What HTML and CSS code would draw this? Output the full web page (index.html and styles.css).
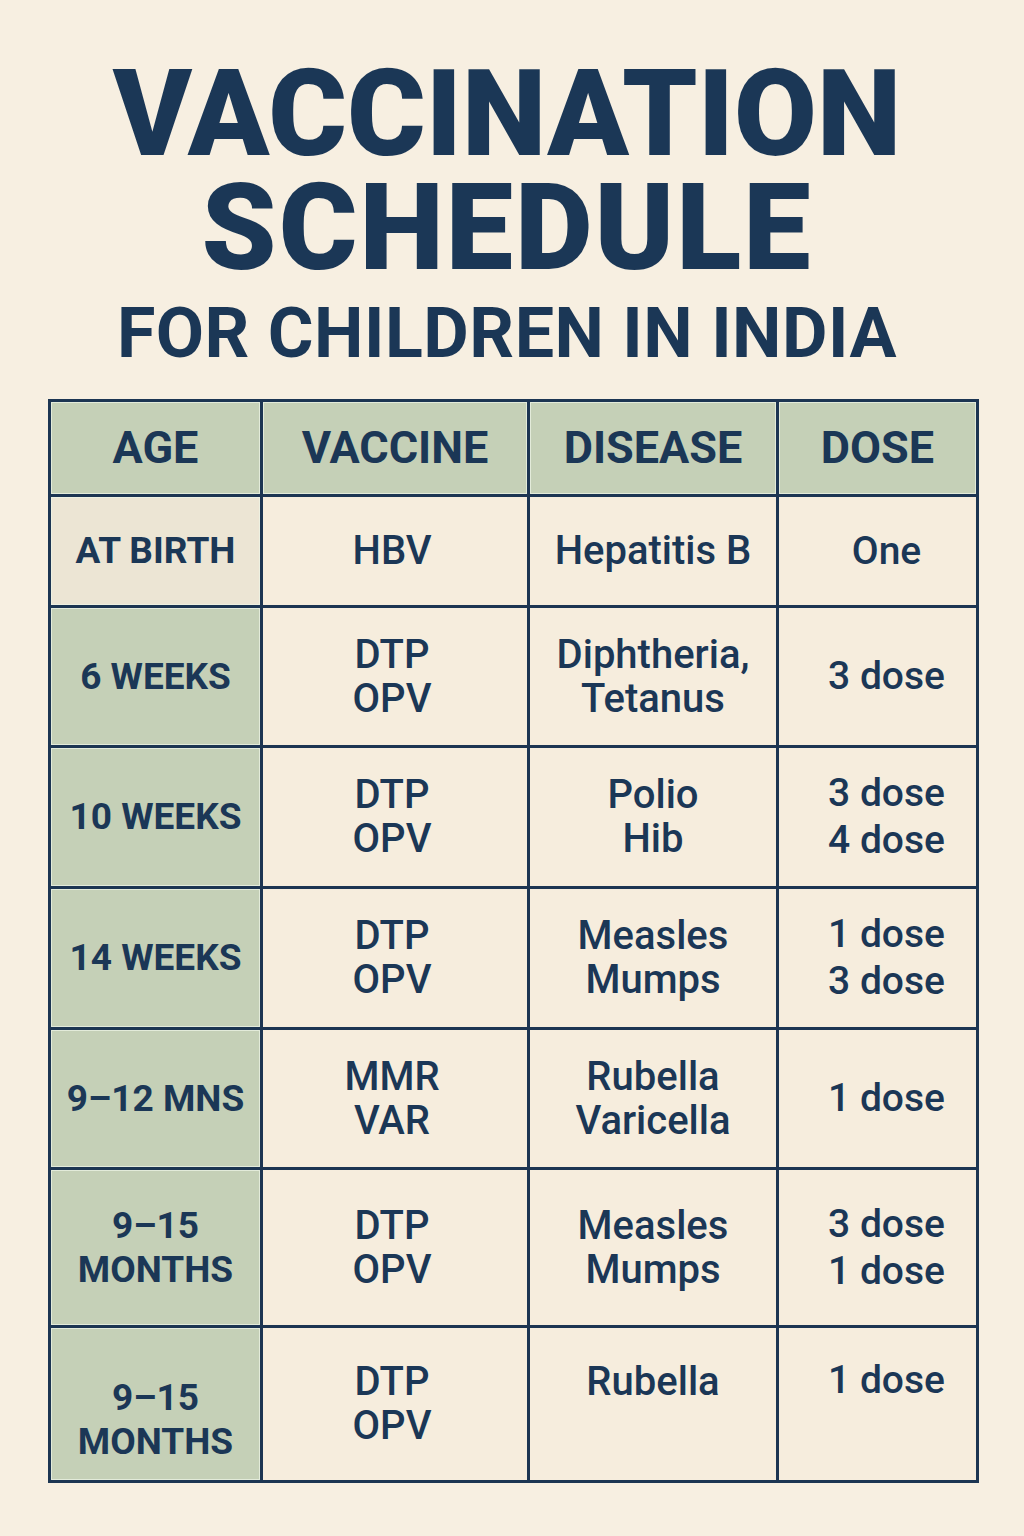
FILE: index.html
```html
<!DOCTYPE html>
<html lang="en">
<head>
<meta charset="utf-8">
<title>Vaccination Schedule for Children in India</title>
<link rel="stylesheet" href="styles.css">
</head>
<body>
<main class="page">
  <header class="heading">
    <h1 class="title"><span class="title-line">VACCINATION</span><span class="title-line wide">SCHEDULE</span></h1>
    <p class="subtitle">FOR CHILDREN IN INDIA</p>
  </header>
  <table class="schedule">
    <colgroup>
      <col class="c-age"><col class="c-vac"><col class="c-dis"><col class="c-dose">
    </colgroup>
    <thead>
      <tr class="r-head">
        <th>AGE</th><th>VACCINE</th><th>DISEASE</th><th>DOSE</th>
      </tr>
    </thead>
    <tbody>
      <tr class="r1">
        <td class="age age-birth">AT BIRTH</td>
        <td class="vac">HBV</td>
        <td class="dis">Hepatitis B</td>
        <td class="dose">One</td>
      </tr>
      <tr class="r2">
        <td class="age">6 WEEKS</td>
        <td class="vac">DTP<br>OPV</td>
        <td class="dis">Diphtheria,<br>Tetanus</td>
        <td class="dose">3 dose</td>
      </tr>
      <tr class="r3">
        <td class="age">10 WEEKS</td>
        <td class="vac">DTP<br>OPV</td>
        <td class="dis">Polio<br>Hib</td>
        <td class="dose">3 dose<br>4 dose</td>
      </tr>
      <tr class="r4">
        <td class="age">14 WEEKS</td>
        <td class="vac">DTP<br>OPV</td>
        <td class="dis">Measles<br>Mumps</td>
        <td class="dose">1 dose<br>3 dose</td>
      </tr>
      <tr class="r5">
        <td class="age">9–12 MNS</td>
        <td class="vac">MMR<br>VAR</td>
        <td class="dis">Rubella<br>Varicella</td>
        <td class="dose">1 dose</td>
      </tr>
      <tr class="r6">
        <td class="age">9–15<br>MONTHS</td>
        <td class="vac">DTP<br>OPV</td>
        <td class="dis">Measles<br>Mumps</td>
        <td class="dose">3 dose<br>1 dose</td>
      </tr>
      <tr class="r7">
        <td class="age age-low">9–15<br>MONTHS</td>
        <td class="vac">DTP<br>OPV</td>
        <td class="dis">Rubella<br>&nbsp;</td>
        <td class="dose">1 dose<br>&nbsp;</td>
      </tr>
    </tbody>
  </table>
</main>
</body>
</html>
```

FILE: styles.css
```css
html, body {
  margin: 0;
  padding: 0;
  background: #f7efe1;
}

body {
  font-family: Roboto, "Liberation Sans", Arial, sans-serif;
  color: #1b3756;
}

.page {
  width: 1024px;
  height: 1536px;
  box-sizing: border-box;
  padding-top: 57px;
}

.heading {
  text-align: center;
  padding-right: 10px;
}

.title {
  margin: 0;
  font-size: 120px;
  line-height: 114px;
  font-weight: 900;
}

.title-line {
  display: block;
  height: 114px;
}

.title-line.wide {
  letter-spacing: 2px;
}

.subtitle {
  margin: 8px 0 0;
  font-size: 70px;
  line-height: 80px;
  font-weight: 700;
  letter-spacing: 0.5px;
}

.schedule {
  margin: 26px 0 0 48px;
  width: 928px;
  border-collapse: collapse;
  border: 3px solid #1c3552;
  table-layout: fixed;
}

.c-age { width: 212px; }
.c-vac { width: 267px; }
.c-dis { width: 249px; }
.c-dose { width: 200px; }

.schedule th,
.schedule td {
  border: 3px solid #1c3552;
  text-align: center;
  vertical-align: middle;
  padding: 0;
  background: #f6eddd;
}

.schedule th {
  background: #c5d0b7;
  font-size: 45px;
  font-weight: 700;
  line-height: 50px;
  box-shadow: inset 0 0 0 1px rgba(240, 246, 232, 0.7);
}

.r-head { height: 95px; }
.r1 { height: 111px; }
.r2 { height: 140px; }
.r3 { height: 141px; }
.r4 { height: 141px; }
.r5 { height: 140px; }
.r6 { height: 158px; }
.r7 { height: 155px; }

.schedule td.age {
  background: #c5d0b7;
  font-size: 37px;
  line-height: 44px;
  font-weight: 700;
  box-shadow: inset 0 0 0 1px rgba(240, 246, 232, 0.7);
}

.schedule td.age-birth {
  background: #ece5d4;
}

.schedule td.age-low {
  padding-top: 32px;
}

.vac {
  font-size: 40px;
  line-height: 44px;
  font-weight: 500;
}

.schedule td.vac {
  padding-right: 6px;
}

.dis {
  font-size: 40px;
  line-height: 44px;
  font-weight: 500;
}

.dose {
  font-size: 39px;
  line-height: 47px;
  font-weight: 500;
}

.schedule td.dose {
  padding-left: 18px;
}
```
